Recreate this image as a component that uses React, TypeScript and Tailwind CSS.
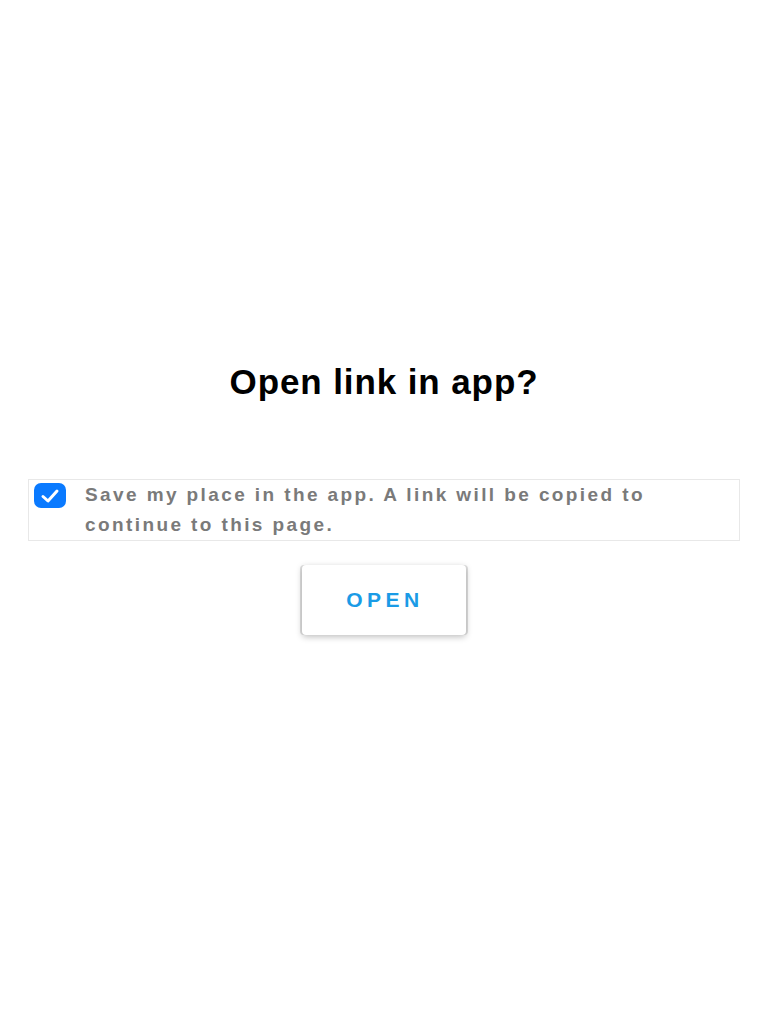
import React from "react";

export default function App() {
  return (
    <div
      className="w-[768px] h-[1024px] bg-white flex flex-col items-center"
      style={{ fontFamily: "'Liberation Sans', Arial, sans-serif" }}
    >
      <h1 className="mt-[362px] text-[35px] leading-[40px] font-bold text-black tracking-[0.9px]">
        Open link in app?
      </h1>

      <label className="mt-[77px] w-[712px] h-[62px] border border-[#e8e8e8] flex items-start pl-[5px] pt-[3px]">
        <span className="w-[32px] h-[25px] rounded-[7px] bg-[#0a7aff] flex items-center justify-center shrink-0">
          <svg width="20" height="16" viewBox="0 0 20 16" fill="none">
            <path
              d="M3 8.5 L8 13 L17 3"
              stroke="white"
              strokeWidth="3"
              strokeLinecap="round"
              strokeLinejoin="round"
            />
          </svg>
        </span>
        <span className="ml-[19px] -mt-[3px] text-[19px] leading-[30px] font-bold text-[#7a7a7a] tracking-[2.4px]">
          Save my place in the app. A link will be copied to
          <br />
          continue to this page.
        </span>
      </label>

      <button className="mt-[24px] w-[164px] h-[70px] pl-[2px] bg-white rounded-[4px] shadow-[0_2px_6px_rgba(0,0,0,0.25),-2px_0_0_rgba(0,0,0,0.12),2px_0_0_rgba(0,0,0,0.12)] text-[#1a9be6] text-[21px] font-bold tracking-[4.5px]">
        OPEN
      </button>
    </div>
  );
}
